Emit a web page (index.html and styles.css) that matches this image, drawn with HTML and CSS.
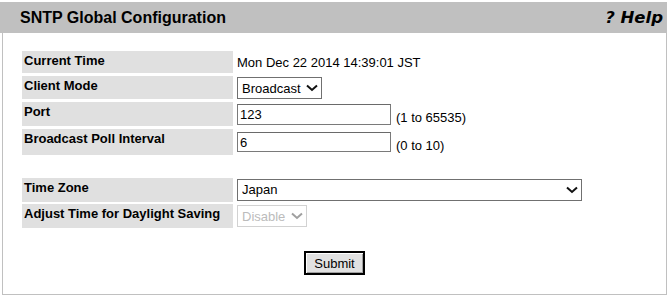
FILE: index.html
```html
<!DOCTYPE html>
<html>
<head>
<meta charset="utf-8">
<link rel="stylesheet" href="styles.css">
</head>
<body>
<div class="page">
  <div class="header">
    <span class="title">SNTP Global Configuration</span>
    <span class="help">? Help</span>
  </div>
  <div class="box">
    <div class="grid grid-top">
      <div class="label">Current Time</div>
      <div class="value">Mon Dec 22 2014 14:39:01 JST</div>
      <div class="label">Client Mode</div>
      <div class="value">
        <span class="sel sel-mode">
          <select><option>Broadcast</option></select>
          <svg class="chev" width="12" height="8" viewBox="0 0 12 8"><path d="M1 1.5 L6 6 L11 1.5" fill="none" stroke="#111" stroke-width="2"/></svg>
        </span>
      </div>
      <div class="label">Port</div>
      <div class="value row-port">
        <input class="txt" type="text" value="123">
        <span class="hint">(1 to 65535)</span>
      </div>
      <div class="label">Broadcast Poll Interval</div>
      <div class="value row-poll">
        <input class="txt" type="text" value="6">
        <span class="hint">(0 to 10)</span>
      </div>
    </div>
    <div class="grid grid-bottom">
      <div class="label">Time Zone</div>
      <div class="value">
        <span class="sel sel-tz">
          <select><option>Japan</option></select>
          <svg class="chev" width="12" height="8" viewBox="0 0 12 8"><path d="M1 1.5 L6 6 L11 1.5" fill="none" stroke="#111" stroke-width="2"/></svg>
        </span>
      </div>
      <div class="label">Adjust Time for Daylight Saving</div>
      <div class="value">
        <span class="sel sel-dst">
          <select disabled><option>Disable</option></select>
          <svg class="chev" width="12" height="8" viewBox="0 0 12 8"><path d="M1 1.5 L6 6 L11 1.5" fill="none" stroke="#a0a0a0" stroke-width="2"/></svg>
        </span>
      </div>
    </div>
    <div class="actions">
      <button class="submit" type="button">Submit</button>
    </div>
  </div>
</div>
</body>
</html>
```

FILE: styles.css
```css
html, body {
  margin: 0;
  padding: 0;
  background: #ffffff;
}
body {
  font-family: "Liberation Sans", Arial, sans-serif;
  font-size: 13px;
  color: #000;
}
.page {
  padding-top: 2px;
  width: 667px;
}
.header {
  height: 31px;
  background: #c0c0c0;
  display: flex;
  align-items: center;
  justify-content: space-between;
  padding: 0 4px 0 20px;
}
.title {
  font-weight: bold;
  font-size: 16px;
}
.help {
  font-family: "DejaVu Sans", "Open Sans", sans-serif;
  font-weight: bold;
  font-style: italic;
  font-size: 16.5px;
}
.box {
  margin-left: 2px;
  border: 1px solid #c0c0c0;
  border-top: none;
  height: 262px;
  box-sizing: border-box;
  padding: 18px 19px 0 19px;
}
.grid {
  display: grid;
  grid-template-columns: 211px auto;
  column-gap: 4px;
  row-gap: 3px;
}
.grid-top {
  grid-template-rows: 22px 23px 24px 26px;
}
.grid-bottom {
  margin-top: 23px;
  grid-template-rows: 24px 24px;
  row-gap: 2px;
}
.label {
  background: #e0e0e0;
  font-weight: bold;
  padding: 2px 2px 0 2px;
  line-height: 15px;
}
.value {
  display: flex;
  align-items: center;
  line-height: 15px;
}
.row-port {
  align-items: flex-start;
  padding-top: 2px;
}
.row-poll {
  align-items: flex-start;
  padding-top: 3px;
}
.txt {
  box-sizing: border-box;
  width: 154px;
  height: 21px;
  border: 1px solid #7a7a7a;
  border-top-color: #6a6a6a;
  padding: 1px 2px;
  font-family: "Liberation Sans", Arial, sans-serif;
  font-size: 13px;
  margin: 0;
  outline: none;
}
.row-poll .txt {
  height: 20px;
}
.hint {
  margin-left: 5px;
  margin-top: 6px;
}
.sel {
  position: relative;
  display: inline-block;
}
.sel select {
  -webkit-appearance: none;
  appearance: none;
  box-sizing: border-box;
  border: 1px solid #707070;
  border-radius: 0;
  background: #fff;
  font-family: "Liberation Sans", Arial, sans-serif;
  font-size: 13px;
  color: #000;
  padding: 0 0 0 4px;
  margin: 0;
  display: block;
}
.sel .chev {
  position: absolute;
  top: 50%;
  margin-top: -4px;
  right: 4px;
  pointer-events: none;
}
.sel-mode select {
  width: 85px;
  height: 22px;
}
.sel-mode {
  margin-top: 1px;
}
.sel-tz select {
  width: 345px;
  height: 22px;
}
.sel-tz {
  margin-top: -1px;
}
.sel-dst select {
  width: 70px;
  height: 22px;
  border-color: #c0c0c0;
  color: #a0a0a0;
  background: #fff;
}
.actions {
  display: flex;
  justify-content: center;
  margin-top: 23px;
}
.submit {
  box-sizing: border-box;
  width: 61px;
  height: 24px;
  border: 2px solid #000;
  background: #e1e1e1;
  font-family: "Liberation Sans", Arial, sans-serif;
  font-size: 13px;
  color: #000;
  padding: 0;
  box-shadow: inset 1px 1px 0 #fff, inset -1px -1px 0 #a0a0a0;
}
```
